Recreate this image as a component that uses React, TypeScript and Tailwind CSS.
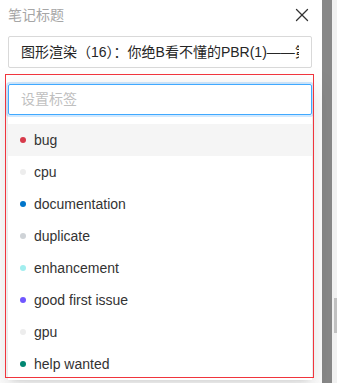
import React from 'react';
import { X } from 'lucide-react';

const tags = [
  { name: 'bug', color: '#d73a4a' },
  { name: 'cpu', color: '#ededed' },
  { name: 'documentation', color: '#0075ca' },
  { name: 'duplicate', color: '#cfd3d7' },
  { name: 'enhancement', color: '#a2eeef' },
  { name: 'good first issue', color: '#7057ff' },
  { name: 'gpu', color: '#ededed' },
  { name: 'help wanted', color: '#008672' },
];

const font = { fontFamily: '"Liberation Sans", "Noto Sans CJK SC", sans-serif' };

export default function App() {
  return (
    <div className="flex h-[383px] w-[337px] overflow-hidden bg-white" style={font}>
      {/* drawer panel */}
      <div className="relative w-[322px] shrink-0 bg-white">
        <div className="flex h-[30px] items-center justify-between pl-2 pr-[9px]">
          <span className="text-[14px] text-[#a6a6a6]">笔记标题</span>
          <X size={22} strokeWidth={1.4} className="text-[#333]" />
        </div>

        <div className="ml-2 mr-[10px] mt-[6px] flex h-[32px] items-center rounded-[2px] border border-[#d9d9d9] px-3 text-[14px] text-[#262626]">
          <span className="overflow-hidden whitespace-nowrap">图形渲染（16）：你绝B看不懂的PBR(1)——第一章</span>
        </div>

        {/* tag select popup */}
        <div className="ml-2 mr-[10px] mt-4 bg-white shadow-[0_3px_6px_-4px_rgba(0,0,0,0.12),0_6px_16px_0_rgba(0,0,0,0.08),0_9px_28px_8px_rgba(0,0,0,0.05)]">
          <div className="flex h-[31px] items-center rounded-[2px] border border-[#40a9ff] pl-3 text-[14px] text-[#bfbfbf] shadow-[0_0_0_2px_rgba(24,144,255,0.2)]">
            设置标签
          </div>
          <div className="mt-[5px] pt-1">
            {tags.map((t, i) => (
              <div
                key={t.name}
                className={`flex h-8 items-center gap-[8px] pl-[12px] text-[14px] text-[#333] ${i === 0 ? 'bg-[#f5f5f5]' : ''}`}
              >
                <span className="h-[6px] w-[6px] rounded-full" style={{ backgroundColor: t.color }} />
                <span>{t.name}</span>
              </div>
            ))}
          </div>
        </div>

        {/* highlight outline */}
        <div className="pointer-events-none absolute left-[5px] top-[74px] h-[304px] w-[309px] border border-[#f0353d]" />
      </div>

      {/* scrollbar */}
      <div className="w-[10px] shrink-0 bg-[#888]" />
      <div className="relative w-[5px] shrink-0 bg-[#f1f1f1]">
        <div className="absolute right-0 top-[298px] h-[35px] w-[3px] bg-[#c1c1c1]" />
      </div>
    </div>
  );
}
